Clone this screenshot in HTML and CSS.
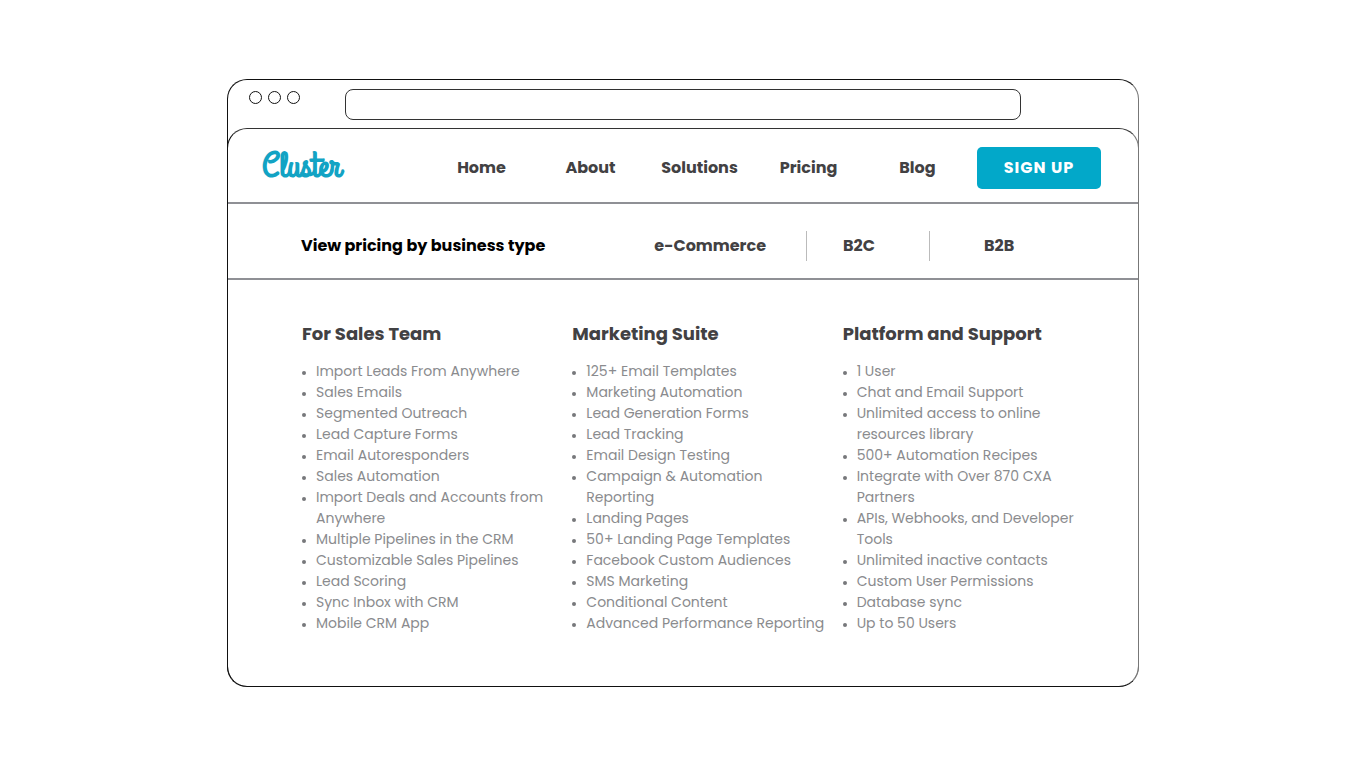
FILE: index.html
```html
<!DOCTYPE html>
<html lang="en">
<head>
  <meta charset="UTF-8" />
  <meta name="viewport" content="width=device-width, initial-scale=1.0"/>
  <title>Cluster Pricing</title>
  <link rel="stylesheet" href="styles.css">
</head>
<body>
  <div class="browser">
    <div class="browser-bar">
      <div class="dots">
        <span class="dot"></span>
        <span class="dot"></span>
        <span class="dot"></span>
      </div>
      <input type="text" class="address" aria-label="Address" />
    </div>

    <div class="page">
      <header class="topbar">
        <a href="#" class="logo">Cluster</a>
        <nav class="main-nav">
          <a href="#">Home</a>
          <a href="#">About</a>
          <a href="#">Solutions</a>
          <a href="#">Pricing</a>
          <a href="#">Blog</a>
        </nav>
        <button type="button" class="signup">SIGN UP</button>
      </header>

      <section class="types">
        <h1>View pricing by business type</h1>
        <nav class="type-nav">
          <a href="#">e-Commerce</a>
          <a href="#">B2C</a>
          <a href="#">B2B</a>
        </nav>
      </section>

      <main class="features">
        <section class="feature-col">
          <h2>For Sales Team</h2>
          <ul>
            <li>Import Leads From Anywhere</li>
            <li>Sales Emails</li>
            <li>Segmented Outreach</li>
            <li>Lead Capture Forms</li>
            <li>Email Autoresponders</li>
            <li>Sales Automation</li>
            <li>Import Deals and Accounts from Anywhere</li>
            <li>Multiple Pipelines in the CRM</li>
            <li>Customizable Sales Pipelines</li>
            <li>Lead Scoring</li>
            <li>Sync Inbox with CRM</li>
            <li>Mobile CRM App</li>
          </ul>
        </section>

        <section class="feature-col">
          <h2>Marketing Suite</h2>
          <ul>
            <li>125+ Email Templates</li>
            <li>Marketing Automation</li>
            <li>Lead Generation Forms</li>
            <li>Lead Tracking</li>
            <li>Email Design Testing</li>
            <li>Campaign &amp; Automation Reporting</li>
            <li>Landing Pages</li>
            <li>50+ Landing Page Templates</li>
            <li>Facebook Custom Audiences</li>
            <li>SMS Marketing</li>
            <li>Conditional Content</li>
            <li>Advanced Performance Reporting</li>
          </ul>
        </section>

        <section class="feature-col">
          <h2>Platform and Support</h2>
          <ul>
            <li>1 User</li>
            <li>Chat and Email Support</li>
            <li>Unlimited access to online resources library</li>
            <li>500+ Automation Recipes</li>
            <li>Integrate with Over 870 CXA Partners</li>
            <li>APIs, Webhooks, and Developer Tools</li>
            <li>Unlimited inactive contacts</li>
            <li>Custom User Permissions</li>
            <li>Database sync</li>
            <li>Up to 50 Users</li>
          </ul>
        </section>
      </main>
    </div>
  </div>
</body>
</html>
```
FILE: styles.css
```css
* {
  box-sizing: border-box;
}
body {
  margin: 0;
  padding: 79px 20px;
  background-color: #fff;
  color: #424143;
  font-family: Poppins, Inter, sans-serif;
}
a {
  color: inherit;
  text-decoration: none;
}
h1, h2, ul {
  margin: 0;
  padding: 0;
}

/* Browser frame */
.browser {
  max-width: 912px;
  margin: 0 auto;
  border: 1px solid #111;
  border-right-color: #777;
  border-radius: 20px;
}
.browser-bar {
  display: flex;
  align-items: flex-start;
  height: 48px;
  padding: 9px 117px 0 20px;
}
.dots {
  display: flex;
  gap: 6px;
  width: 97px;
  padding-top: 2px;
  padding-left: 1px;
}
.dot {
  width: 13px;
  height: 13px;
  border: 1px solid #111;
  border-radius: 50%;
}
.address {
  flex: 1;
  height: 31px;
  padding: 0 12px;
  border: 1px solid #333;
  border-radius: 8px;
  background: none;
  font: inherit;
}
.page {
  margin: 0 -1px;
  border-top: 1px solid #333;
  border-left: 1px solid #111;
  border-right: 1px solid #777;
  border-radius: 20px;
}

/* Header */
.topbar {
  display: flex;
  align-items: center;
  height: 75px;
  padding: 4px 37px 0 34px;
  border-bottom: 2px solid #8f9095;
}
.logo {
  flex: 1;
  padding-bottom: 2px;
  color: #12a3c4;
  font-family: "Grand Hotel", "Liberation Serif", cursive;
  font-size: 36px;
  font-weight: bold;
  line-height: 42px;
}
.main-nav {
  display: grid;
  grid-template-columns: repeat(5, 109px);
  margin-right: 5px;
  font-size: 16px;
  font-weight: 700;
  text-align: center;
}
.signup {
  width: 124px;
  height: 42px;
  border: none;
  border-radius: 5px;
  background-color: #02a8c9;
  color: #fff;
  font-family: inherit;
  font-size: 16px;
  font-weight: 700;
  letter-spacing: 1px;
}

/* Business types */
.types {
  display: flex;
  align-items: center;
  justify-content: space-between;
  height: 76px;
  padding: 9px 37px 0 73px;
  border-bottom: 2px solid #8f9095;
}
.types h1 {
  color: #000;
  font-size: 16px;
  font-weight: 700;
}
.type-nav {
  display: flex;
  font-size: 16px;
  font-weight: 700;
  line-height: 30px;
}
.type-nav a {
  padding-right: 40px;
}
.type-nav a + a {
  width: 123px;
  padding-left: 36px;
  padding-right: 0;
  border-left: 1px solid #bbb;
}
.type-nav a:last-child {
  width: 172px;
  padding-left: 54px;
}

/* Feature lists */
.features {
  display: grid;
  grid-template-columns: repeat(3, 1fr);
  gap: 14px;
  padding: 40px 39px 52px 74px;
}
.feature-col h2 {
  margin-bottom: 14px;
  font-size: 18px;
  font-weight: 700;
  line-height: 27px;
}
.feature-col ul {
  padding-left: 14px;
  color: #8a8b8e;
  font-size: 14px;
  line-height: 21px;
  list-style: none;
}
.feature-col li::before {
  content: "";
  float: left;
  width: 4px;
  height: 4px;
  margin-top: 10px;
  margin-left: -14px;
  border-radius: 50%;
  background-color: #77787b;
}
```
